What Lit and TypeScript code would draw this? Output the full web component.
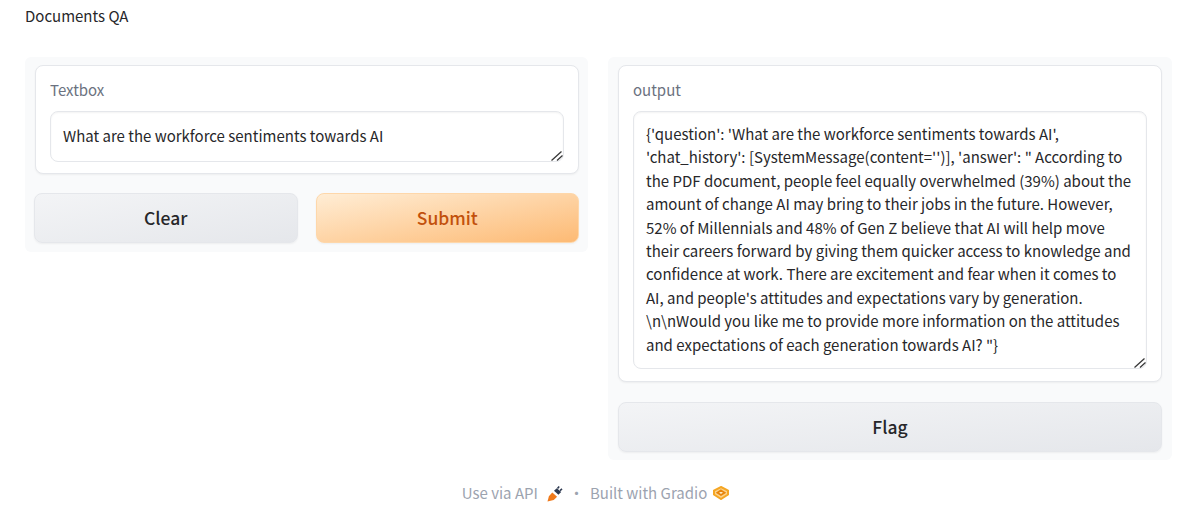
import { LitElement, css, html } from "lit";
import { customElement } from "lit/decorators.js";

const QUESTION = "What are the workforce sentiments towards AI";
// broken by hand so the lines fall where they do in the screenshot
const ANSWER = [
  `{'question': 'What are the workforce sentiments towards AI',`,
  `'chat_history': [SystemMessage(content='')], 'answer': " According to`,
  `the PDF document, people feel equally overwhelmed (39%) about the`,
  `amount of change AI may bring to their jobs in the future. However,`,
  `52% of Millennials and 48% of Gen Z believe that AI will help move`,
  `their careers forward by giving them quicker access to knowledge and`,
  `confidence at work. There are excitement and fear when it comes to`,
  `AI, and people's attitudes and expectations vary by generation.`,
  `\\n\\nWould you like me to provide more information on the attitudes`,
  `and expectations of each generation towards AI? "}`,
].join("\n");

const grip = html`
  <svg class="grip" width="12" height="12" viewBox="0 0 12 12" fill="none">
    <path d="M0.5 11.5L10.5 2.5M6 11.5L11.5 6.5" stroke="#3a3a3a" stroke-width="1.3" />
  </svg>
`;

@customElement("app-root")
export class AppRoot extends LitElement {
  render() {
    return html`
      <div class="page">
        <div class="title">Documents QA</div>
        <div class="columns">
          <div class="panel left">
            <label class="card">
              <span class="label">Textbox</span>
              <span class="field">
                <textarea class="short" readonly .value=${QUESTION}></textarea>
                ${grip}
              </span>
            </label>
            <div class="actions">
              <button class="btn">Clear</button>
              <button class="btn primary">Submit</button>
            </div>
          </div>
          <div class="panel right">
            <label class="card">
              <span class="label">output</span>
              <span class="field">
                <textarea class="tall" readonly wrap="off" .value=${ANSWER}></textarea>
                ${grip}
              </span>
            </label>
            <button class="btn">Flag</button>
          </div>
        </div>
        <footer>
          <span class="link">Use via API
            <svg width="16" height="18" viewBox="0 0 16 18">
              <path d="M0.5 17.5l1.4-5.2 3.4-3.8 4.8 4.2-3.4 3.2z" fill="#f07a1c" />
              <path d="M7 6.8l2.8-2.6 4.4 3.8-2.8 2.8z" fill="#2f3b52" />
              <path d="M10.5 4.5l1.7-2M13 6.7l2-1.8" stroke="#2f3b52" stroke-width="1.6" />
            </svg>
          </span>
          <span class="dot">·</span>
          <span class="link built">Built with Gradio
            <svg width="16" height="14" viewBox="0 0 16 14" fill="none">
              <path d="M8 1L15 4.5V8.5L8 13L1 8.5V4.5Z" fill="#fbd38d" stroke="#f5a623" stroke-width="2" />
              <path d="M8 4.4L11.6 6.7L8 9L4.4 6.7Z" fill="#fdeec8" stroke="#e8850c" stroke-width="1.8" />
            </svg>
          </span>
        </footer>
      </div>
    `;
  }

  static styles = css`
    :host {
      display: block;
      height: 508px;
      overflow: hidden;
      background: #fff;
      font-family: "Noto Sans CJK SC", "Noto Sans", sans-serif;
      color: #1f2937;
    }
    .page {
      padding: 6px 25px 0 25px;
    }
    .title {
      font-size: 15px;
      line-height: 20px;
      height: 51px;
      color: #27272a;
    }
    .columns {
      display: grid;
      grid-template-columns: 563px 564px;
      gap: 20px;
      align-items: start;
    }
    .panel {
      display: flex;
      flex-direction: column;
      box-sizing: border-box;
      background: #f9fafb;
      border-radius: 6px;
    }
    .left {
      gap: 19px;
      padding: 8px 9px 9px 10px;
    }
    .right {
      gap: 20px;
      padding: 8px 10px;
    }
    .card {
      display: block;
      box-sizing: border-box;
      padding: 13px 14px 12px;
      background: #fff;
      border: 1px solid #e5e7eb;
      border-radius: 8px;
      box-shadow: 0 1px 2px rgba(0, 0, 0, 0.05);
    }
    .left .card {
      padding-bottom: 11px;
    }
    .label {
      display: block;
      height: 32px;
      font-size: 15px;
      line-height: 22px;
      color: #6b7280;
    }
    .field {
      display: block;
      position: relative;
    }
    .grip {
      position: absolute;
      right: 1px;
      bottom: 1px;
      pointer-events: none;
    }
    textarea {
      display: block;
      box-sizing: border-box;
      width: 100%;
      margin: 0;
      font: inherit;
      font-size: 15px;
      line-height: 23.4px;
      color: #27272a;
      background: #fff;
      border: 1px solid #e5e7eb;
      border-radius: 8px;
      box-shadow: inset 0 1px 2px rgba(0, 0, 0, 0.05);
      outline: none;
      overflow: hidden;
      resize: none;
    }
    .short {
      height: 51px;
      padding: 12px 12px;
    }
    .tall {
      height: 258px;
      padding: 10px 12px;
    }
    .actions {
      display: grid;
      grid-template-columns: 1fr 1fr;
      gap: 18px;
      margin-left: -1px;
    }
    .btn {
      height: 50px;
      padding: 0 0 2px;
      font: inherit;
      font-size: 17.5px;
      font-weight: 500;
      color: #27272a;
      background: linear-gradient(to bottom right, #f3f4f6, #e5e7eb);
      border: 1px solid #e5e7eb;
      border-radius: 8px;
      box-shadow: 0 1px 2px rgba(0, 0, 0, 0.05);
    }
    .primary {
      color: #c2500c;
      background: linear-gradient(to bottom right, #ffedd5, #fdba74);
      border-color: #fed7aa;
    }
    footer {
      display: flex;
      justify-content: center;
      align-items: center;
      gap: 6px;
      margin-top: 22px;
      padding-right: 9px;
      font-size: 15px;
      line-height: 22px;
      color: #9ca3af;
    }
    .link {
      display: inline-flex;
      align-items: center;
      gap: 9px;
    }
    .built {
      gap: 6px;
    }
  `;
}

declare global {
  interface HTMLElementTagNameMap {
    "app-root": AppRoot;
  }
}
